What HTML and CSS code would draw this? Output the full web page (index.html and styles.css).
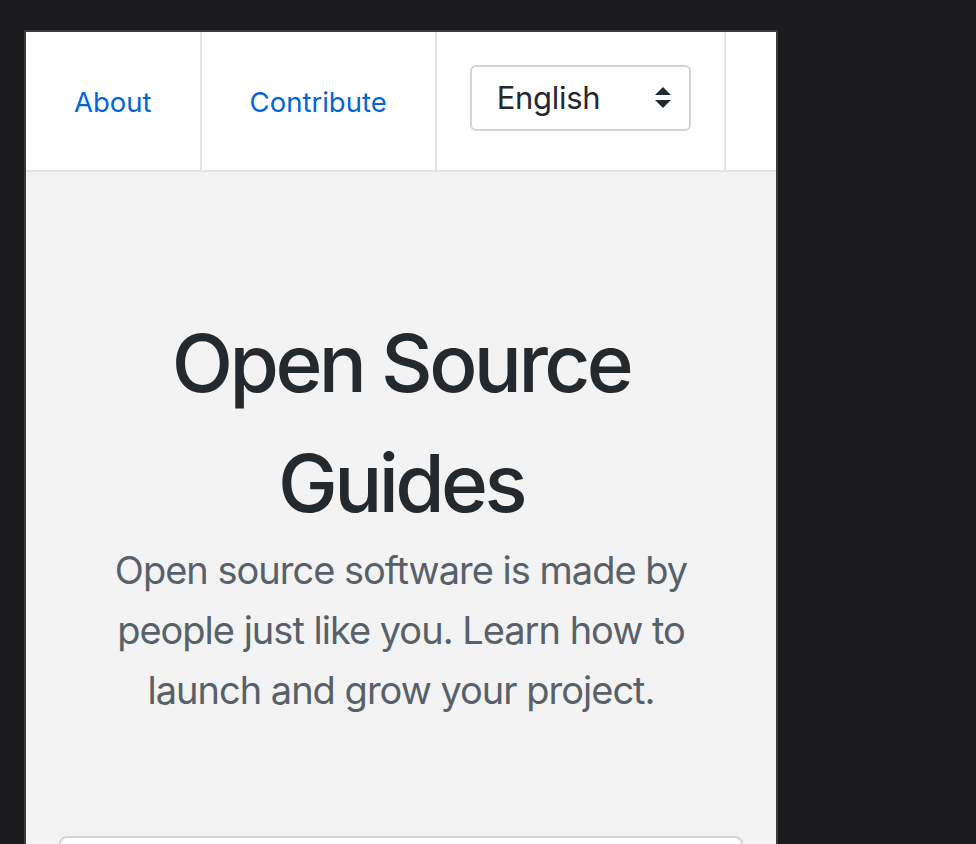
FILE: index.html
```html
<!DOCTYPE html>
<html lang="en">
<head>
<meta charset="utf-8">
<title>Open Source Guides</title>
<link rel="stylesheet" href="styles.css">
</head>
<body>
<div class="frame">
  <nav class="nav">
    <a class="nav-item" href="#">About</a>
    <a class="nav-item" href="#">Contribute</a>
    <div class="nav-item nav-select">
      <div class="select">
        <span class="select-label">English</span>
        <svg class="select-arrows" width="18" height="24" viewBox="0 0 18 24" aria-hidden="true">
          <path d="M9 1 L17 9 L1 9 Z" fill="#24292e"/>
          <path d="M1 14 L17 14 L9 22 Z" fill="#24292e"/>
        </svg>
      </div>
    </div>
    <div class="nav-fill"></div>
  </nav>
  <header class="hero">
    <h1 class="hero-title">Open Source Guides</h1>
    <p class="hero-lead">Open source software is made by people just like you. Learn how to launch and grow your project.</p>
  </header>
  <section class="card-wrap">
    <div class="card"></div>
  </section>
</div>
</body>
</html>
```

FILE: styles.css
```css
html, body {
  margin: 0;
  padding: 0;
  background: #1c1c1e;
  height: 100%;
  overflow: hidden;
}
body {
  font-family: Inter, "Noto Sans", "Liberation Sans", sans-serif;
}
.frame {
  margin: 30px 0 0 24px;
  width: 750px;
  border: 2px solid #3a3a3c;
  border-bottom: none;
  background: #f3f3f3;
  min-height: 900px;
}
.nav {
  display: flex;
  height: 138px;
  background: #fff;
  border-bottom: 2px solid #e1e4e8;
}
.nav-item {
  display: flex;
  align-items: center;
  padding: 2px 48px 0;
  border-right: 2px solid #e1e4e8;
  color: #0366d6;
  text-decoration: none;
  font-size: 27.5px;
}
.nav-select {
  padding: 0 33px 6px;
}
.nav-fill {
  flex: 1;
}
.select {
  box-sizing: border-box;
  width: 221px;
  height: 66px;
  border: 2px solid #d1d5da;
  border-radius: 6px;
  display: flex;
  align-items: center;
  justify-content: space-between;
  padding: 0 17px 0 25px;
  color: #24292e;
  font-size: 31px;
  letter-spacing: -0.3px;
  background: #fff;
}
.select-label {
  margin-top: -2px;
}
.hero {
  padding: 131px 33px 0;
  text-align: center;
}
.hero-title {
  margin: 0;
  font-size: 80px;
  font-weight: 500;
  line-height: 120px;
  color: #24292e;
  letter-spacing: -3.6px;
}
.hero-lead {
  margin: -3px auto 0;
  max-width: 600px;
  font-size: 38px;
  line-height: 60px;
  color: #586069;
  letter-spacing: -1px;
}
.card-wrap {
  padding: 116px 33px 0;
}
.card {
  height: 80px;
  background: #fff;
  border: 2px solid #d1d5da;
  border-radius: 8px;
}
```
